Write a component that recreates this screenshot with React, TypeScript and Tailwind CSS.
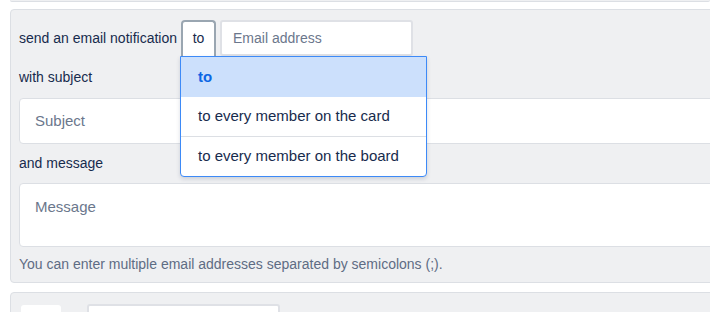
import React from "react";

export default function App() {
  const font = { fontFamily: '"Liberation Sans", Arial, sans-serif' };
  return (
    <div className="w-[710px] h-[312px] overflow-hidden bg-white relative text-[14px] text-[#172b4d]" style={font}>
      <div className="ml-[10px] h-[2px] bg-[#eff0f2] border-b border-[#dcdfe4] rounded-b-[3px]" />
      <div className="mt-[7px] ml-[10px] w-[720px] h-[274px] bg-[#eff0f2] border border-[#dcdfe4] rounded-[4px] px-2 pt-[10px]">
        <div className="flex items-center h-[36px]">
          <span className="mr-[4px]">send an email notification</span>
          <div className="relative">
            <div className="w-[35px] h-[36px] bg-white border-2 border-b-0 border-[#9aa6b1] rounded-t-[4px] flex items-center justify-center pb-[1px]">
              to
            </div>
          </div>
          <div className="ml-[4px] w-[193px] h-[36px] bg-white border-2 border-[#dfe1e6] rounded-[3px] flex items-center pl-[11px] text-[#6b778c]">
            Email address
          </div>
        </div>
        <div className="h-[42px] flex items-center">with subject</div>
        <div className="w-[720px] h-[46px] bg-white border border-[#dcdfe4] rounded-[4px] flex items-center pl-[15px] text-[15px] text-[#6b778c]">
          Subject
        </div>
        <div className="h-[39px] flex items-center">and message</div>
        <div className="w-[720px] h-[64px] bg-white border border-[#dcdfe4] rounded-[4px] pl-[15px] pt-[12px] text-[15px] text-[#6b778c]">
          Message
        </div>
        <div className="h-[34px] flex items-center text-[#5e6c84]">
          You can enter multiple email addresses separated by semicolons (;).
        </div>
      </div>
      <div className="mt-[9px] ml-[10px] w-[720px] h-[40px] bg-[#eff0f2] border border-[#dcdfe4] rounded-[4px] flex items-start pt-[11px] pl-[10px]">
        <div className="w-[40px] h-[30px] bg-white rounded-[3px] mt-[1px]" />
        <div className="ml-[26px] w-[193px] h-[30px] bg-white border-2 border-[#dfe1e6] rounded-[3px]" />
      </div>
      <div className="absolute left-[180px] top-[56px] w-[247px] bg-white border border-[#3d8af7] rounded-b-[4px] shadow-[0_2px_4px_rgba(9,30,66,0.15)] text-[15px]">
        <div className="h-[40px] bg-[#cce0fc] flex items-center pl-[17px] font-bold text-[#0c66e4]">to</div>
        <div className="h-[39px] flex items-center pl-[17px]">to every member on the card</div>
        <div className="h-[40px] border-t border-[#dcdfe4] flex items-center pl-[17px]">to every member on the board</div>
      </div>
    </div>
  );
}
